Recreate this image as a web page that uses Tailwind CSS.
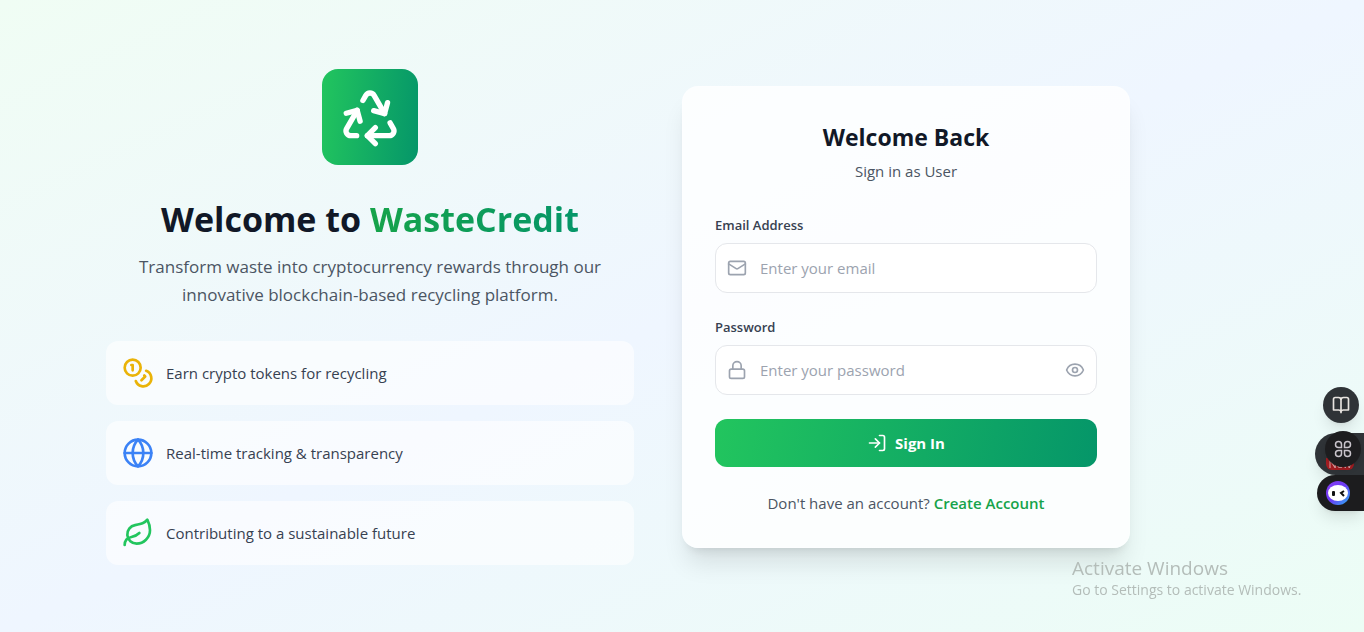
<!DOCTYPE html>
<html lang="en">
<head>
  <meta charset="UTF-8">
  <meta name="viewport" content="width=device-width, initial-scale=1.0">
  <title>WasteCredit - Sign In</title>
  <script src="https://cdn.jsdelivr.net/npm/@tailwindcss/browser@4"></script>
</head>
<body class="font-['Segoe_UI','Open_Sans',sans-serif] text-[#111827]">
  <main class="min-h-screen pt-0.5 flex items-center justify-center bg-[linear-gradient(to_bottom_right,#f0fdf4,#eff6ff,#ecfdf5)]">
    <div class="w-full max-w-6xl grid grid-cols-2 items-center">

      <!-- Intro -->
      <section class="pr-12 text-center">
        <div class="size-24 mx-auto mb-8 rounded-2xl flex items-center justify-center bg-[linear-gradient(95deg,#22c55e,#059669)]">
          <svg class="size-16 text-white" viewBox="0 0 24 24" fill="none" stroke="currentColor" stroke-width="2" stroke-linecap="round" stroke-linejoin="round">
            <path d="M7 19H4.815a1.83 1.83 0 0 1-1.57-.881 1.785 1.785 0 0 1-.004-1.784L7.196 9.5"/>
            <path d="M11 19h8.203a1.83 1.83 0 0 0 1.556-.89 1.784 1.784 0 0 0 0-1.775l-1.226-2.12"/>
            <path d="m14 16-3 3 3 3"/>
            <path d="M8.293 13.596 7.196 9.5 3.1 10.598"/>
            <path d="m9.344 5.811 1.093-1.892A1.83 1.83 0 0 1 11.985 3a1.784 1.784 0 0 1 1.546.888l3.943 6.843"/>
            <path d="m13.378 9.633 4.096 1.098 1.097-4.096"/>
          </svg>
        </div>
        <h1 class="text-[34px] leading-10 font-bold pt-0.5 mb-3.5">Welcome to <span class="bg-[linear-gradient(to_right,#16a34a,#059669)] bg-clip-text text-transparent">WasteCredit</span></h1>
        <p class="text-[17px] leading-7 text-[#4b5563] mb-8">Transform waste into cryptocurrency rewards through our<br>innovative blockchain-based recycling platform.</p>

        <ul class="space-y-4 text-left text-[15px] leading-6 text-[#374151]">
          <li class="flex items-center gap-3 p-4 rounded-xl bg-white/60">
            <svg class="size-8 text-[#eab308]" viewBox="0 0 24 24" fill="none" stroke="currentColor" stroke-width="2" stroke-linecap="round" stroke-linejoin="round">
              <circle cx="8" cy="8" r="6"/><path d="M18.09 10.37A6 6 0 1 1 10.34 18"/><path d="M7 6h1v4"/><path d="m16.71 13.88.7.71-2.82 2.82"/>
            </svg>
            <span>Earn crypto tokens for recycling</span>
          </li>
          <li class="flex items-center gap-3 p-4 rounded-xl bg-white/60">
            <svg class="size-8 text-[#3b82f6]" viewBox="0 0 24 24" fill="none" stroke="currentColor" stroke-width="2" stroke-linecap="round" stroke-linejoin="round">
              <circle cx="12" cy="12" r="10"/><path d="M12 2a14.5 14.5 0 0 0 0 20 14.5 14.5 0 0 0 0-20"/><path d="M2 12h20"/>
            </svg>
            <span>Real-time tracking &amp; transparency</span>
          </li>
          <li class="flex items-center gap-3 p-4 rounded-xl bg-white/60">
            <svg class="size-8 text-[#22c55e]" viewBox="0 0 24 24" fill="none" stroke="currentColor" stroke-width="2" stroke-linecap="round" stroke-linejoin="round">
              <path d="M11 20A7 7 0 0 1 9.8 6.1C15.5 5 17 4.48 19 2c1 2 2 4.18 2 8 0 5.5-4.78 10-10 10Z"/><path d="M2 21c0-3 1.85-5.36 5.08-6C9.5 14.52 12 13 13 12"/>
            </svg>
            <span>Contributing to a sustainable future</span>
          </li>
        </ul>
      </section>

      <!-- Sign in card -->
      <section class="w-full max-w-md p-8 rounded-2xl border border-white/20 bg-white/80 shadow-xl">
        <div class="text-center mb-8">
          <h2 class="text-[23px] leading-8 font-bold pt-0.5 mb-1.5">Welcome Back</h2>
          <p class="text-[15px] leading-6 text-[#4b5563]">Sign in as User</p>
        </div>

        <form class="space-y-6" onsubmit="return false">
          <div>
            <label for="email" class="block text-[13px] leading-5 font-semibold text-[#374151] mb-2">Email Address</label>
            <div class="relative">
              <svg class="absolute left-3 top-1/2 -translate-y-1/2 size-5 text-[#9ca3af]" viewBox="0 0 24 24" fill="none" stroke="currentColor" stroke-width="2" stroke-linecap="round" stroke-linejoin="round">
                <rect width="20" height="16" x="2" y="4" rx="2"/><path d="m22 7-8.97 5.7a1.94 1.94 0 0 1-2.06 0L2 7"/>
              </svg>
              <input type="email" id="email" placeholder="Enter your email" class="block w-full pl-11 pr-4 py-3 text-[15px] leading-6 bg-white border border-[#e5e7eb] rounded-xl placeholder:text-[#9ca3af]">
            </div>
          </div>
          <div>
            <label for="password" class="block text-[13px] leading-5 font-semibold text-[#374151] mb-2">Password</label>
            <div class="relative">
              <svg class="absolute left-3 top-1/2 -translate-y-1/2 size-5 text-[#9ca3af]" viewBox="0 0 24 24" fill="none" stroke="currentColor" stroke-width="2" stroke-linecap="round" stroke-linejoin="round">
                <rect width="18" height="11" x="3" y="11" rx="2"/><path d="M7 11V7a5 5 0 0 1 10 0v4"/>
              </svg>
              <input type="password" id="password" placeholder="Enter your password" class="block w-full px-11 py-3 text-[15px] leading-6 bg-white border border-[#e5e7eb] rounded-xl placeholder:text-[#9ca3af]">
              <button type="button" id="togglePassword" aria-label="Show password" class="absolute right-3 top-1/2 -translate-y-1/2 text-[#9ca3af]">
                <svg class="size-5" viewBox="0 0 24 24" fill="none" stroke="currentColor" stroke-width="2" stroke-linecap="round" stroke-linejoin="round">
                  <path d="M2.062 12.348a1 1 0 0 1 0-.696 10.75 10.75 0 0 1 19.876 0 1 1 0 0 1 0 .696 10.75 10.75 0 0 1-19.876 0"/><circle cx="12" cy="12" r="3"/>
                </svg>
              </button>
            </div>
          </div>
          <button type="submit" class="w-full flex items-center justify-center gap-2 py-3 rounded-xl text-[15px] leading-6 font-bold text-white bg-[linear-gradient(100deg,#22c55e,#059669)]">
            <svg class="size-5" viewBox="0 0 24 24" fill="none" stroke="currentColor" stroke-width="2" stroke-linecap="round" stroke-linejoin="round">
              <path d="M15 3h4a2 2 0 0 1 2 2v14a2 2 0 0 1-2 2h-4"/><path d="m10 17 5-5-5-5"/><path d="M15 12H3"/>
            </svg>
            Sign In
          </button>
        </form>

        <p class="mt-6 text-center text-[15px] leading-6 text-[#4b5563]">Don't have an account? <a href="#" class="font-semibold text-[#16a34a]">Create Account</a></p>
      </section>
    </div>
  </main>

  <!-- Activation notice -->
  <aside class="fixed right-14 bottom-8 w-59 text-[#b4bdb9] pointer-events-none">
    <p class="text-[19px] leading-6">Activate Windows</p>
    <p class="text-[14px] leading-5">Go to Settings to activate Windows.</p>
  </aside>

  <!-- Side widgets -->
  <div class="fixed right-0 top-[387px] w-[49px] h-[124px]">
    <button aria-label="Reader" class="absolute left-2 top-0 size-9 rounded-full bg-[#2f3337] flex items-center justify-center shadow-lg">
      <svg class="size-5 text-[#e8e4e0]" viewBox="0 0 24 24" fill="none" stroke="currentColor" stroke-width="2" stroke-linejoin="round">
        <path d="M12 6v16M5 3h4a3 3 0 0 1 3 3 3 3 0 0 1 3-3h4a2 2 0 0 1 2 2v13h-6a3 3 0 0 0-3 2 3 3 0 0 0-3-2H3V5a2 2 0 0 1 2-2z"/>
      </svg>
    </button>
    <div class="absolute left-0 top-[46px] w-[49px] h-[42px] rounded-l-full bg-[#2f3337] shadow-lg"></div>
    <span class="absolute left-[11px] top-[71px] w-7 h-3 rounded-b-md bg-[#a51d22] text-[11px] leading-3 text-center text-[#e5b5b5]">New</span>
    <button aria-label="Apps" class="absolute left-[10px] top-11 size-9 rounded-full bg-[#1d1d1f] flex items-center justify-center shadow-md">
      <svg class="size-[18px] text-[#c9c4cb]" viewBox="0 0 24 24" fill="none" stroke="currentColor" stroke-width="2">
        <path d="M6 2a4 4 0 1 0 0 8h4V6a4 4 0 0 0-4-4zM18 2a4 4 0 1 1 0 8h-4V6a4 4 0 0 1 4-4zM6 22a4 4 0 1 1 0-8h4v4a4 4 0 0 1-4 4zM18 22a4 4 0 1 0 0-8h-4v4a4 4 0 0 0 4 4z"/>
      </svg>
    </button>
    <button aria-label="Assistant" class="absolute left-0.5 top-[88px] w-[47px] h-9 pl-[9px] rounded-l-full bg-[#1c1c1e] flex items-center shadow-lg">
      <svg class="size-6" viewBox="0 0 24 24">
        <defs><linearGradient id="ring" x1="0" y1="0" x2="1" y2="1"><stop offset="0" stop-color="#8a3cf0"/><stop offset=".5" stop-color="#6a3cf5"/><stop offset="1" stop-color="#28b8f5"/></linearGradient></defs>
        <circle cx="12" cy="12" r="12" fill="url(#ring)"/>
        <ellipse cx="12" cy="12" rx="10" ry="8" fill="#fff"/>
        <rect x="6" y="10" width="3" height="5" rx="1" fill="#111"/>
        <path d="M18 10l-3 2 3 3" fill="none" stroke="#111" stroke-width="2"/>
      </svg>
    </button>
  </div>

  <script>
    const password = document.getElementById('password');
    document.getElementById('togglePassword').addEventListener('click', () => {
      password.type = password.type === 'password' ? 'text' : 'password';
    });
  </script>
</body>
</html>
